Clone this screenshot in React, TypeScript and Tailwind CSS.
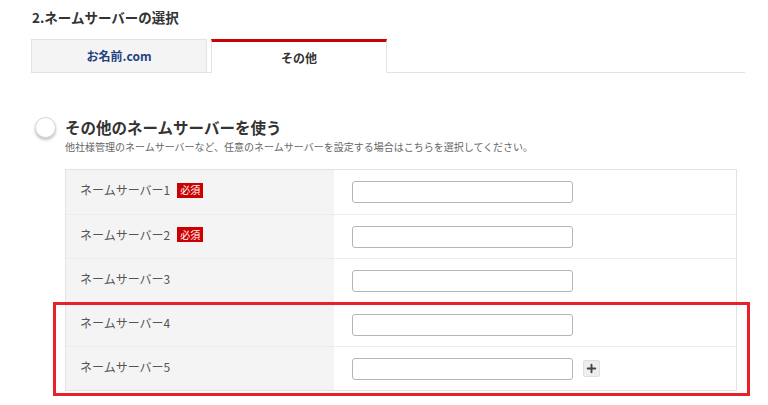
import React from 'react';
import { Plus } from 'lucide-react';

const font = { fontFamily: '"Noto Sans CJK JP", "Noto Sans", "Liberation Sans", sans-serif' };

const rows = [
  { label: 'ネームサーバー1', required: true },
  { label: 'ネームサーバー2', required: true },
  { label: 'ネームサーバー3', required: false },
  { label: 'ネームサーバー4', required: false },
  { label: 'ネームサーバー5', required: false, add: true },
];

export default function App() {
  return (
    <div className="w-[768px] h-[405px] bg-white overflow-hidden" style={font}>
      <div className="pl-[31px] pr-[23px] pt-[8px]">
        <h2 className="pl-[1px] text-[13.5px] leading-[18px] font-bold text-[#333]">2.ネームサーバーの選択</h2>

        <div className="mt-[13px] flex items-end">
          <div className="w-[176px] h-[34px] flex items-center justify-center bg-[#f4f4f4] border border-[#e3e3e3] text-[12px] font-bold text-[#23407e]">
            お名前.com
          </div>
          <div className="w-[4px] h-[34px] border-b border-[#e3e3e3]" />
          <div className="w-[176px] h-[34px] flex items-center justify-center bg-white border-t-[3px] border-t-[#cc0000] border-x border-x-[#e3e3e3] text-[12px] font-bold text-[#333]">
            その他
          </div>
          <div className="flex-1 h-[34px] border-b border-[#e3e3e3]" />
        </div>
      </div>

      <div className="mt-[43px] pl-[35px] flex items-start">
        <span className="mt-[1px] w-[21px] h-[21px] rounded-full bg-white border border-[#d6d6d6] shadow-[0_2px_3px_rgba(0,0,0,0.25)]" />
        <div className="ml-[9px]">
          <div className="text-[15.5px] leading-[22px] font-bold text-[#333]">その他のネームサーバーを使う</div>
          <div className="mt-[2px] text-[10px] leading-[14px] text-[#666]">
            他社様管理のネームサーバーなど、任意のネームサーバーを設定する場合はこちらを選択してください。
          </div>
        </div>
      </div>

      <div className="relative ml-[65px] mt-[15px] w-[672px] border border-[#e3e3e3]">
        {rows.map((r, i) => (
          <div key={i} className={`flex h-[44px] ${i > 0 ? 'border-t border-[#ececec]' : ''}`}>
            <div className="w-[268px] bg-[#f4f4f4] pl-[14px] flex items-center gap-[7px] pb-[4px]">
              <span className="text-[12px] text-[#555]">{r.label}</span>
              {r.required && (
                <span className="h-[15px] w-[26px] flex items-center justify-center bg-[#cc0000] text-white text-[10px] leading-none">必須</span>
              )}
            </div>
            <div className="flex-1 flex items-center pl-[18px]">
              <input
                type="text"
                className="w-[221px] h-[22px] rounded-[3px] border border-[#b5b5b5] bg-white outline-none"
              />
              {r.add && (
                <button className="ml-[10px] w-[17px] h-[17px] flex items-center justify-center rounded-[2px] bg-[#eeeeee] border border-[#e0e0e0]">
                  <Plus size={13} strokeWidth={3.5} className="text-[#444]" />
                </button>
              )}
            </div>
          </div>
        ))}
        <div className="absolute left-[-13px] top-[132px] w-[697px] h-[94px] border-[3px] border-[#e8202a] pointer-events-none" />
      </div>
    </div>
  );
}
